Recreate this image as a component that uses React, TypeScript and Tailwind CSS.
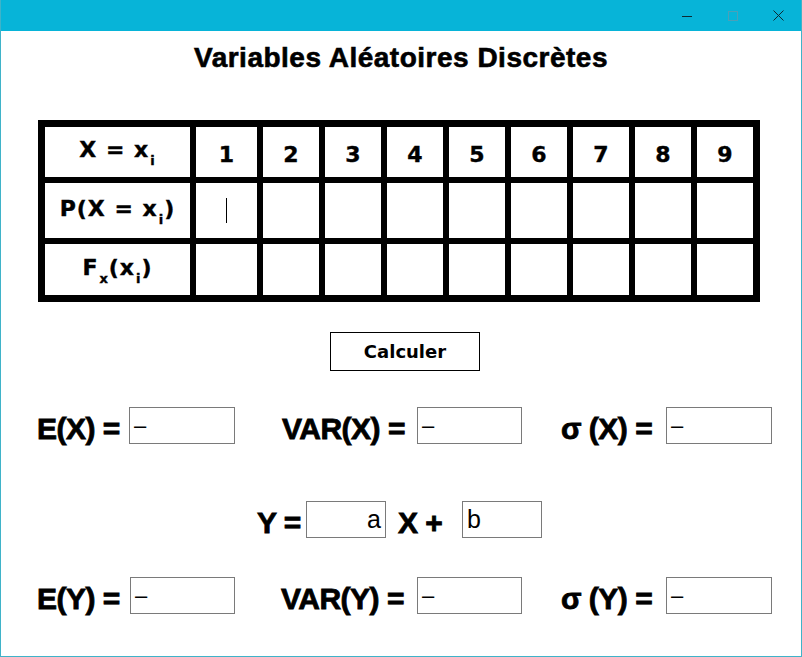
import type { ReactNode } from 'react';

const heavy = { fontFamily: '"Liberation Sans", Arial, sans-serif' };
const table = { fontFamily: '"DejaVu Sans", Verdana, sans-serif' };

function Field({ value = '–', align = 'left', width }: { value?: string; align?: 'left' | 'right'; width: string }) {
	return (
		<div
			className={`${width} h-[37px] shrink-0 border border-[#7a7a7a] bg-white flex items-center text-black ${
				align === 'right' ? 'justify-end pr-[4px]' : 'justify-start pl-[4px]'
			} ${value === '–' ? 'text-[22px]' : 'text-[25px]'}`}
			style={heavy}
		>
			{value}
		</div>
	);
}

function Label({ children, width, ml = '' }: { children: ReactNode; width: string; ml?: string }) {
	return (
		<div
			className={`${width} ${ml} h-[37px] shrink-0 text-[30px] font-bold leading-[43px] tracking-[-0.5px] text-black whitespace-nowrap [-webkit-text-stroke:0.8px_black]`}
			style={heavy}
		>
			{children}
		</div>
	);
}

function Sub({ children }: { children: ReactNode }) {
	return <span className="text-[13px] align-[-8px] ml-[1px]">{children}</span>;
}

export default function App() {
	const digits = [1, 2, 3, 4, 5, 6, 7, 8, 9];

	return (
		<div className="w-[802px] h-[657px] flex flex-col bg-white border-x border-b border-[#3fb3c9] overflow-hidden">
			{/* Title bar */}
			<div className="h-[31px] shrink-0 bg-[#07b4d8] flex items-center justify-end -mx-px">
				<svg width="10" height="10" viewBox="0 0 10 10" className="mr-[36px]">
					<line x1="0" y1="5.5" x2="10" y2="5.5" stroke="#0d2a33" strokeWidth="1" />
				</svg>
				<svg width="10" height="10" viewBox="0 0 10 10" className="mr-[35px]">
					<rect x="0.5" y="0.5" width="9" height="9" fill="none" stroke="#4aa0b8" strokeWidth="1" />
				</svg>
				<svg width="11" height="11" viewBox="0 0 11 11" className="mr-[18px]">
					<path d="M0.5 0.5 L10.5 10.5 M10.5 0.5 L0.5 10.5" stroke="#0d2a33" strokeWidth="1" />
				</svg>
			</div>

			{/* Title */}
			<h1
				className="mt-[12px] text-center text-[28px] font-bold leading-[30px] tracking-[0.5px] text-black [-webkit-text-stroke:0.6px_black]"
				style={heavy}
			>
				Variables Aléatoires Discrètes
			</h1>

			{/* Table */}
			<div className="mt-[47px] ml-[37px] w-[722px] bg-black p-[7px]">
				<div
					className="grid grid-cols-[145px_61px_repeat(8,56px)] grid-rows-[50px_55px_51px] gap-[6px] text-[22px] font-bold text-black [-webkit-text-stroke:0.4px_black]"
					style={table}
				>
					<div className="bg-white flex items-center justify-center tracking-[1px]">
						<span>
							X = x<Sub>i</Sub>
						</span>
					</div>
					{digits.map((d) => (
						<div key={d} className="bg-white flex items-center justify-center text-[22px] pt-[4px]">
							{d}
						</div>
					))}

					<div className="bg-white flex items-center justify-center tracking-[1px]">
						<span>
							P(X = x<Sub>i</Sub>)
						</span>
					</div>
					{digits.map((d) => (
						<div key={d} className="bg-white flex items-center justify-center">
							{d === 1 && <span className="w-px h-[25px] bg-black" />}
						</div>
					))}

					<div className="bg-white flex items-center justify-center tracking-[1px]">
						<span>
							F<Sub>x</Sub>(x<Sub>i</Sub>)
						</span>
					</div>
					{digits.map((d) => (
						<div key={d} className="bg-white" />
					))}
				</div>
			</div>

			{/* Button */}
			<div className="mt-[30px] ml-[329px]">
				<button
					className="w-[150px] h-[39px] border border-black bg-white text-[18px] font-bold text-black"
					style={table}
				>
					Calculer
				</button>
			</div>

			{/* E(X) row */}
			<div className="mt-[36px] flex items-center">
				<Label width="w-[92px]" ml="ml-[36px]">E(X) =</Label>
				<Field width="w-[106px]" />
				<Label width="w-[135px]" ml="ml-[47px]">VAR(X) =</Label>
				<Field width="w-[105px]" />
				<Label width="w-[105px]" ml="ml-[39px]">σ (X) =</Label>
				<Field width="w-[106px]" />
			</div>

			{/* Y = aX + b */}
			<div className="mt-[57px] flex items-center">
				<Label width="w-[49px]" ml="ml-[256px]">Y =</Label>
				<Field width="w-[80px]" value="a" align="right" />
				<Label width="w-[64px]" ml="ml-[12px]">X +</Label>
				<Field width="w-[80px]" value="b" />
			</div>

			{/* E(Y) row */}
			<div className="mt-[39px] flex items-center">
				<Label width="w-[93px]" ml="ml-[36px]">E(Y) =</Label>
				<Field width="w-[105px]" />
				<Label width="w-[136px]" ml="ml-[46px]">VAR(Y) =</Label>
				<Field width="w-[105px]" />
				<Label width="w-[105px]" ml="ml-[39px]">σ (Y) =</Label>
				<Field width="w-[106px]" />
			</div>
		</div>
	);
}
